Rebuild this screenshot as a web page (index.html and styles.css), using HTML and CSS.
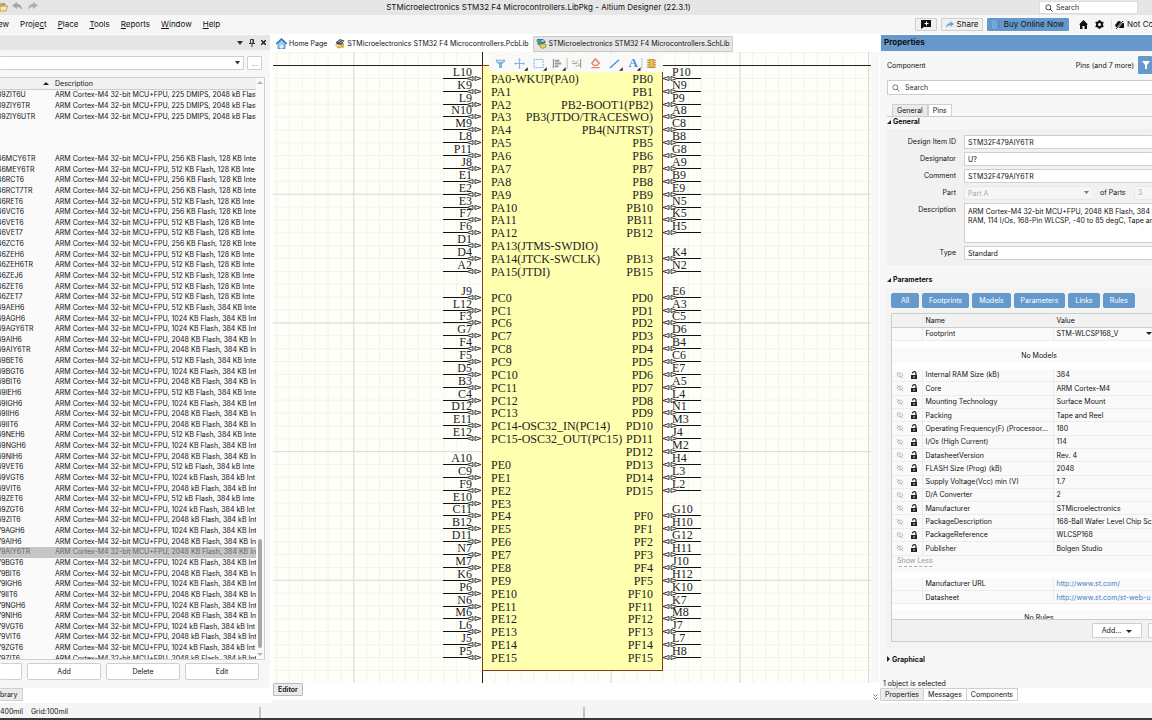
FILE: index.html
```html
<!DOCTYPE html>
<html lang="en">

<head>
    <meta charset="UTF-8">
    <meta name="viewport" content="width=device-width, initial-scale=1.0">
    <title>Altium Designer</title>
    <link rel="stylesheet" href="styles.css">
</head>

<body>
    <header class="titlebar">
        <div class="quick">
            <svg width="8" height="10" viewBox="0 0 8 10"><path d="M0 1h5l1 2v6H0z" fill="#d9b45f"/><path d="M0 4h7.500L6 9H0z" fill="#fbe7a6" stroke="#a8843c" stroke-width=".7"/><path d="M1 2h4" stroke="#5e93c5"/></svg>
            <svg width="11" height="9" viewBox="0 0 11 9"><path d="M5 0v2c3 0 5 2 5 6-1-2-2.500-3-5-3v2L0 3.500z" fill="#a5a5a5"/></svg>
            <svg width="11" height="9" viewBox="0 0 11 9"><path d="M6 0v2C3 2 1 4 1 8c1-2 2.500-3 5-3v2l5-3.500z" fill="#b0b0b0"/></svg>
        </div>
        <h1 class="title">STMicroelectronics STM32 F4 Microcontrollers.LibPkg - Altium Designer (22.3.1)</h1>
        <label class="title-search">
            <svg width="8" height="8" viewBox="0 0 8 8"><circle cx="3.300" cy="3.300" r="2.500" fill="none" stroke="#444"/><path d="M5 5l2.500 2.500" stroke="#444"/></svg>
            <input type="text" placeholder="Search" aria-label="Search">
        </label>
    </header>

    <nav class="menubar">
        <ul class="menu">
            <li>ew</li>
            <li>Proje<u>c</u>t</li>
            <li><u>P</u>lace</li>
            <li><u>T</u>ools</li>
            <li><u>R</u>eports</li>
            <li><u>W</u>indow</li>
            <li><u>H</u>elp</li>
        </ul>
        <div class="actions">
            <button class="btn-note" aria-label="Comment"><svg width="12" height="9" viewBox="0 0 12 9"><path d="M1 0h10v7H4L1 9z" fill="#111"/><path d="M6.500 1.500v4M4.500 3.500h4" stroke="#fff"/></svg></button>
            <button class="btn-share"><svg width="8" height="7" viewBox="0 0 8 7"><path d="M4.500 0L8 3 4.500 6V4.200C2.500 4.200 1 5 0 7c0-3 1.500-5 4.500-5z" fill="#6da9dc"/></svg>Share</button>
            <button class="btn-buy"><svg width="9" height="9" viewBox="0 0 9 9"><path d="M1 1v7M4 1v7M1 1h2M1 8h2" stroke="#86bdf0" fill="none"/><path d="M7 1v7" stroke="#4f82b4"/></svg>Buy Online Now</button>
            <svg width="9" height="9" viewBox="0 0 9 9"><path d="M4.500 0L9 4.500H8V9H5.500V6h-2v3H1V4.500H0z" fill="#111"/></svg>
            <svg width="9" height="9" viewBox="0 0 9 9"><circle cx="4.500" cy="4.500" r="2.500" fill="none" stroke="#111" stroke-width="2"/><path d="M4.500 0v2M4.500 7v2M.6 2.300l1.700 1M6.700 5.700l1.700 1M.6 6.700l1.700-1M6.700 3.300l1.700-1" stroke="#111" stroke-width="1.800"/></svg>
            <span class="cloud"><svg width="9" height="8" viewBox="0 0 9 8"><path d="M1 6a2 2 0 0 1 .5-3.500A2.500 2.500 0 0 1 6 1L2 6zM3.500 7l4-5A2 2 0 0 1 8 7z" fill="#111"/><path d="M1 8L8 0" stroke="#111"/></svg>Not Co</span>
        </div>
    </nav>

    <main class="workspace">
        <!-- library list -->
        <section class="library">
            <div class="panel-head">
                <svg width="6" height="4" viewBox="0 0 6 4"><path d="M0 0h6L3 4z" fill="#333"/></svg>
                <svg width="6" height="8" viewBox="0 0 6 8"><path d="M1.500 4V.5h3V4M0 4.500h6M3 5v3" fill="none" stroke="#333"/><path d="M4 1v3" stroke="#333"/></svg>
                <svg width="5" height="5" viewBox="0 0 5 5"><path d="M0 0l5 5M5 0L0 5" stroke="#222" stroke-width="1.500"/></svg>
            </div>
            <div class="picker">
                <select aria-label="Library"><option></option></select>
                <button>...</button>
            </div>
            <div class="list">
                <div class="list-scroll">
                    <table class="parts">
                        <thead>
                            <tr><th><span class="sort"></span></th><th>Description</th></tr>
                        </thead>
                        <tbody id="parts"></tbody>
                    </table>
                </div>
                <div class="scrollbar"><i class="up"></i><i class="thumb"></i><i class="down"></i></div>
            </div>
            <div class="list-buttons">
                <button aria-label="Place"></button>
                <button>Add</button>
                <button>Delete</button>
                <button>Edit</button>
            </div>
            <div class="panel-tabs">
                <button class="active cut">brary</button>
            </div>
        </section>

        <!-- schematic editor -->
        <section class="editor">
            <div class="doc-tabs">
                <button><svg width="11" height="11" viewBox="0 0 11 11"><path d="M2 5v5.500h7V5L5.500 2z" fill="#9fccf3" stroke="#3c7fc0" stroke-width=".8"/><path d="M0 6l5.500-5L11 6" fill="none" stroke="#3578bd" stroke-width="1.500"/><path d="M4.500 7h2v3.500h-2z" fill="#fff"/></svg>Home Page</button>
                <button><svg width="11" height="11" viewBox="0 0 11 11"><path d="M1 7l3 3.500 6-1V5L4 4z" fill="#d9b04c"/><path d="M2 4l4-3 4.500 1.500L7 7 2.500 6z" fill="#49545e"/><path d="M4 4l3-2M6 5l3-2" stroke="#a8b5bf"/><path d="M2 7l5 1" stroke="#fbeeb5"/></svg>STMicroelectronics STM32 F4 Microcontrollers.PcbLib</button>
                <button class="active"><svg width="11" height="11" viewBox="0 0 11 11"><path d="M1 1h6l3 3-4 3H2z" fill="#3778a9"/><path d="M0 3h4M1 5h4" stroke="#63b35a" stroke-width="1.200"/><path d="M4 6h6v3l-3 1.500L4 9z" fill="#eccb4e" stroke="#85761f" stroke-width=".6"/><path d="M5 3h3" stroke="#fff"/></svg>STMicroelectronics STM32 F4 Microcontrollers.SchLib</button>
            </div>
            <div class="sheet">
                <svg id="sheet" class="sheet-svg">
                    <defs>
                        <pattern id="minor" x="209" y="13" width="12.870" height="12.870" patternUnits="userSpaceOnUse">
                            <path d="M.5 0v13M0 .5h13" stroke="#f3f3ec" fill="none"/>
                        </pattern>
                        <pattern id="major" x="209" y="13" width="128.700" height="128.700" patternUnits="userSpaceOnUse">
                            <path d="M.5 0v129M0 .5h129" stroke="#dbdcd6" fill="none"/>
                        </pattern>
                    </defs>
                    <rect width="100%" height="100%" fill="#fffffa"/>
                    <rect width="100%" height="100%" fill="url(#minor)"/>
                    <rect width="100%" height="100%" fill="url(#major)"/>
                    <path d="M0 13.500h2000M209.500 0v2000" class="axis"/>
                    <rect x="209.500" y="13.500" width="180" height="605" class="chip"/>
                </svg>
                <div class="float-bar">
                    <svg viewBox="0 0 12 12"><path d="M1 2h10v1.500L7.500 7v4h-3V7L1 3.500z" fill="#7fb0dc"/><path d="M3 3.500h6" stroke="#fff"/></svg>
                    <svg viewBox="0 0 12 12"><path d="M6 1v10M1 6h10" stroke="#86b3db" stroke-width="1.200"/><path d="M6 0l1.500 2h-3zM6 12l1.500-2h-3zM0 6l2-1.500v3zM12 6l-2-1.500v3z" fill="#86b3db"/><path d="M15 10v4h-4z" fill="#222"/></svg>
                    <svg viewBox="0 0 12 12"><path d="M1 1.500h10v9H1z" fill="none" stroke="#6aa0d2" stroke-dasharray="1.500 1"/><path d="M15 10v4h-4z" fill="#222"/></svg>
                    <svg viewBox="0 0 12 12"><path d="M1.500 1v10" stroke="#777"/><path d="M3 2h5v2H3zM3 5h7v2H3zM3 8h4v2H3z" fill="#999"/><path d="M15 10v4h-4z" fill="#222"/><path d="M16.500 0v12" stroke="#bbb"/></svg>
                    <svg viewBox="0 0 12 12"><path d="M10.500 1v10" stroke="#8a9670"/><path d="M1 6h6M1 3.500h3M4 6l4-3M5 8.500h4v-3" stroke="#a9ac7d" fill="none"/></svg>
                    <svg viewBox="0 0 12 12"><path d="M4 8L2 5.500 6 1l4 4.500L8 8" fill="none" stroke="#df8660" stroke-width="1.600"/><path d="M1.500 10.500h9M4 8h4" fill="none" stroke="#df8660" stroke-width="1.300"/></svg>
                    <svg viewBox="0 0 12 12"><path d="M1 11L11 2" stroke="#4a8fd0" stroke-width="1.500"/><path d="M15 10v4h-4z" fill="#222"/></svg>
                    <span class="letter">A</span>
                    <svg viewBox="0 0 12 12"><path d="M3 1h6v10H3z" fill="#d2a33a"/><path d="M1 2.500h10M1 5h10M1 7.500h10M1 10h10" stroke="#a97d27"/><path d="M4 2h4v8H4z" fill="#e6bd55"/><path d="M-4.500 0v12" stroke="#bbb"/><path d="M-6 10v4h-4z" fill="#222"/></svg>
                </div>
            </div>
            <div class="editor-foot">
                <button>Editor</button>
                <svg class="more" width="5" height="6" viewBox="0 0 5 6"><path d="M.5.500l2 2 2-2M.5 3.500l2 2 2-2" fill="none" stroke="#777"/></svg>
            </div>
        </section>

        <!-- properties panel -->
        <aside class="props">
            <h2 class="props-title">Properties</h2>
            <div class="props-body">
                <div class="scope">
                    <span>Component</span>
                    <span class="scope-right">Pins (and 7 more)</span>
                    <button aria-label="Filter"><svg width="10" height="10" viewBox="0 0 10 10"><path d="M1 1h8L6 5v4H4V5z" fill="#fff"/></svg></button>
                </div>
                <label class="search">
                    <svg width="8" height="8" viewBox="0 0 8 8"><circle cx="3.300" cy="3.300" r="2.500" fill="none" stroke="#777"/><path d="M5 5l2.500 2.500" stroke="#777"/></svg>
                    <input type="text" placeholder="Search" aria-label="Search properties">
                </label>
                <div class="tabs">
                    <button class="active">General</button>
                    <button>Pins</button>
                </div>
                <h3><i class="tri"></i>General</h3>
                <form class="general">
                    <label for="item">Design Item ID</label>
                    <input id="item" type="text" value="STM32F479AIY6TR">
                    <label for="desig">Designator</label>
                    <input id="desig" type="text" value="U?">
                    <label for="comment">Comment</label>
                    <input id="comment" type="text" value="STM32F479AIY6TR">
                    <label for="part">Part</label>
                    <div class="part-row">
                        <select id="part" disabled><option>Part A</option></select>
                        <label for="count">of Parts</label>
                        <input id="count" type="text" value="3" disabled>
                    </div>
                    <label for="desc">Description</label>
                    <textarea id="desc">ARM Cortex-M4 32-bit MCU+FPU, 2048 KB Flash, 384 K
RAM, 114 I/Os, 168-Pin WLCSP, -40 to 85 degC, Tape an</textarea>
                    <label for="type">Type</label>
                    <select id="type"><option>Standard</option></select>
                </form>
                <h3 class="h-params"><i class="tri"></i>Parameters</h3>
                <div class="params">
                    <div class="pills">
                        <button>All</button>
                        <button>Footprints</button>
                        <button>Models</button>
                        <button>Parameters</button>
                        <button>Links</button>
                        <button>Rules</button>
                    </div>
                    <div class="grid-box">
                        <table class="grid">
                            <thead>
                                <tr><th></th><th>Name</th><th>Value</th></tr>
                            </thead>
                            <tbody>
                                <tr><td></td><td>Footprint</td><td>STM-WLCSP168_V<i class="drop"></i></td></tr>
                            </tbody>
                        </table>
                        <p class="empty">No Models</p>
                        <table class="grid values">
                            <tbody id="params"></tbody>
                        </table>
                        <div class="less-row"><button class="less">Show Less</button></div>
                        <table class="grid">
                            <tbody>
                                <tr><td></td><td>Manufacturer URL</td><td><a href="#">http://www.st.com/</a></td></tr>
                                <tr><td></td><td>Datasheet</td><td><a href="#">http://www.st.com/st-web-u</a></td></tr>
                            </tbody>
                        </table>
                        <p class="empty rules">No Rules</p>
                        <div class="grid-foot">
                            <button>Add...<i class="drop-s"></i></button>
                            <button aria-label="Edit"></button>
                        </div>
                    </div>
                </div>
                <h3 class="h-graph"><i class="tri shut"></i>Graphical</h3>
                <p class="picked">1 object is selected</p>
            </div>
            <div class="panel-tabs">
                <button class="active">Properties</button>
                <button>Messages</button>
                <button>Components</button>
            </div>
        </aside>
    </main>

    <footer class="status">
        <div class="coords"><span>400mil</span><span>Grid:100mil</span></div>
        <i class="sep"></i>
        <i class="sep"></i>
    </footer>

    <script src="script.js"></script>
</body>

</html>
```
FILE: styles.css
```css
* {
    margin: 0;
    padding: 0;
    box-sizing: border-box;
    list-style: none;
}

body {
    height: 100vh;
    display: flex;
    flex-direction: column;
    overflow: hidden;
    background-color: #fff;
    color: #111;
    font: 7px/11px Inter, "Noto Sans", sans-serif;
    white-space: nowrap;
}

button,
input,
select,
textarea {
    font: inherit;
    color: inherit;
    border: 1px solid #cfcfcf;
    background-color: #fff;
    border-radius: 1px;
    appearance: none;
    min-width: 0;
    outline: none;
}

input::placeholder {
    color: #333;
}

svg {
    flex: none;
}

/* title bar */
.titlebar {
    height: 15px;
    flex: none;
    display: flex;
    align-items: center;
    background-color: #e6e6e6;
}

.quick {
    display: flex;
    align-items: center;
    gap: 4px;
    padding-bottom: 2px;
}

.title {
    flex: 1;
    text-align: center;
    font-size: 8px;
    font-weight: normal;
}

.title-search {
    width: 99px;
    height: 13px;
    margin-right: 14px;
    padding-left: 5px;
    display: flex;
    align-items: center;
    gap: 3px;
    background-color: #fff;
    border: 1px solid #ddd;
}

.title-search input,
.search input {
    flex: 1;
    border: none;
}

/* menu */
.menubar {
    height: 19px;
    flex: none;
    display: flex;
    align-items: center;
    background-color: #f6f6f6;
    font-size: 8px;
}

.menu {
    display: flex;
    gap: 11px;
    flex: 1;
    margin-left: -2px;
}

.actions {
    width: 237px;
    height: 13px;
    overflow: hidden;
    display: flex;
    gap: 4px;
    align-items: center;
}

.actions button {
    height: 13px;
    flex: none;
    display: flex;
    align-items: center;
    justify-content: center;
    gap: 3px;
    background-color: #f0f0f0;
}

.actions .btn-note {
    width: 22px;
}

.actions .btn-share {
    width: 42px;
}

.actions .btn-buy {
    width: 82px;
    margin-right: 6px;
    background-color: #6599cb;
    border-color: #6599cb;
}

.actions > svg {
    margin-right: 3px;
}

.cloud {
    display: flex;
    align-items: center;
    gap: 3px;
    padding-left: 3px;
    border-left: 1px solid #e2e2e2;
}

.workspace {
    flex: 1;
    min-height: 0;
    display: grid;
    grid-template-columns: 270px 1fr 272px;
    padding-top: 1px;
}

.library,
.editor,
.props {
    display: flex;
    flex-direction: column;
    min-width: 0;
    min-height: 0;
    overflow: hidden;
}

/* library panel */
.library {
    background-color: #f7f7f7;
}

.panel-head {
    height: 15px;
    flex: none;
    display: flex;
    align-items: center;
    justify-content: flex-end;
    gap: 6px;
    padding-right: 4px;
    background-color: #e6e6e6;
}

.picker {
    display: flex;
    gap: 3px;
    padding: 6px 8px 7px 0;
}

.picker select {
    flex: 1;
    height: 14px;
    border-left: none;
    background: #fff url("data:image/svg+xml,%3Csvg xmlns='http://www.w3.org/2000/svg' width='5' height='4'%3E%3Cpath d='M0 0h5L2.500 3.500z' fill='%23333'/%3E%3C/svg%3E") no-repeat right 3px center;
}

.picker button {
    width: 15px;
    color: #888;
}

.list {
    flex: 1;
    min-height: 0;
    display: flex;
    margin-right: 5px;
    border: 1px solid #d0d0d0;
    border-left: none;
    background-color: #fafafa;
}

.list-scroll {
    flex: 1;
    overflow: hidden;
}

.parts {
    display: flex;
    flex-direction: column;
    height: calc(100% + 5px);
}

.parts tr {
    display: grid;
    grid-template-columns: 51px 1fr;
    align-items: center;
    min-height: 0;
}

.parts th {
    text-align: left;
    font-weight: normal;
    line-height: 11px;
}

.parts thead {
    background-color: #f1f1f1;
    border-bottom: 1px solid #ccc;
}

.parts th,
.parts td {
    padding-left: 4px;
}

.parts th:first-child {
    padding-left: 43px;
}

.parts tbody {
    flex: 1;
    min-height: 0;
    display: grid;
    grid-auto-rows: minmax(0, 1fr);
}

.parts td {
    line-height: 10px;
    overflow: hidden;
}

.parts td:first-child {
    text-indent: -7px;
}

.parts .selected {
    background-color: #c6c6c6;
    color: #666;
}

.sort {
    display: block;
    width: 6px;
    border: 3px solid transparent;
    border-top: none;
    border-bottom-color: #222;
}

.scrollbar {
    width: 8px;
    display: flex;
    flex-direction: column;
    align-items: center;
    padding: 3px 0;
}

.scrollbar i {
    border: 3px solid transparent;
}

.scrollbar .up {
    border-top: none;
    border-bottom-color: #b5b5b5;
}

.scrollbar .down {
    border-bottom: none;
    border-top-color: #b5b5b5;
}

.scrollbar .thumb {
    width: 4px;
    height: 19%;
    margin-top: auto;
    margin-bottom: 5px;
    border: none;
    border-radius: 2px;
    background-color: #a9a9a9;
}

.list-buttons {
    display: grid;
    grid-template-columns: 22px 1fr 1fr 1fr;
    gap: 5px;
    padding: 3px 11px 8px 0;
}

.list-buttons button {
    height: 17px;
    border-radius: 2px;
}

.list-buttons button:first-child {
    border-left: none;
}

.panel-tabs {
    flex: none;
    height: 15px;
    display: flex;
    align-items: flex-start;
    background-color: #fff;
}

.panel-tabs button {
    height: 13px;
    padding: 0 4px;
    border-left-width: 0;
}

.panel-tabs .active {
    border-left-width: 1px;
    background-color: #ebebeb;
}

.panel-tabs .cut {
    padding-left: 0;
    border-left: none;
}

/* editor */
.editor {
    padding-left: 3px;
    padding-right: 1px;
    background-color: #fff;
}

.doc-tabs {
    height: 17px;
    flex: none;
    display: flex;
    align-items: center;
    gap: 1px;
}

.doc-tabs button {
    height: 16px;
    display: flex;
    align-items: center;
    gap: 2px;
    padding: 0 2px;
    border-color: transparent;
}

.doc-tabs .active {
    background-color: #e6e6e6;
    border-color: #cbcbcb;
}

.sheet {
    flex: 1;
    min-height: 0;
    position: relative;
    overflow: hidden;
    border-right: 8px solid #f8f8f8;
}

.sheet-svg {
    display: block;
    width: 100%;
    height: 100%;
}

.sheet-svg text {
    font: 12px "Liberation Serif", serif;
    fill: #222;
}

.axis {
    stroke: #222;
    fill: none;
}

.chip {
    fill: #ffffb0;
    stroke: #8a3a1a;
}

.pin {
    stroke: #111;
    stroke-width: 1px;
}

.arrow {
    fill: #fff;
    stroke: #333;
    stroke-width: 1px;
}

.float-bar {
    position: absolute;
    top: 2px;
    left: 216px;
    height: 18px;
    width: 174px;
    display: flex;
    align-items: center;
    justify-content: space-between;
    padding: 0 6px;
    background-color: #f9f9f9;
}

.float-bar svg {
    width: 11px;
    height: 11px;
    overflow: visible;
}

.letter {
    font: bold 13px/14px "Liberation Serif", serif;
    color: #4a8fd0;
}

.editor-foot {
    height: 20px;
    flex: none;
    display: flex;
    align-items: flex-start;
    justify-content: space-between;
    border-bottom: 3px solid #f5f5f5;
}

.editor-foot button {
    height: 13px;
    padding: 0 4px;
    background-color: #ebebeb;
    border-color: #bbb;
    font-weight: 600;
}

.more {
    align-self: flex-end;
    margin-right: 1px;
}

/* properties */
.props-title {
    height: 16px;
    flex: none;
    padding-left: 3px;
    background-color: #6599cb;
    font-size: 8px;
    line-height: 15px;
    color: #111;
    border-left: 1px solid #f7f7f7;
}

.props-body {
    flex: 1;
    min-height: 0;
    padding-left: 7px;
    background-color: #f7f7f7;
    display: flex;
    flex-direction: column;
}

.scope {
    display: flex;
    align-items: center;
    padding-top: 5px;
}

.scope-right {
    margin-left: auto;
    margin-right: 4px;
}

.scope button {
    width: 14px;
    height: 18px;
    padding-left: 3px;
    overflow: hidden;
    display: flex;
    align-items: center;
    background-color: #6599cb;
    border: none;
}

.search {
    height: 15px;
    margin-top: 6px;
    padding-left: 4px;
    display: flex;
    align-items: center;
    gap: 5px;
    border: 1px solid #ccc;
    border-right: none;
    background-color: #fff;
}

.tabs {
    display: flex;
    margin-top: 9px;
    padding-left: 5px;
    border-bottom: 1px solid #ccc;
}

.tabs button {
    height: 12px;
    padding: 0 4px;
    border-bottom: none;
}

.tabs .active {
    background-color: #ebebeb;
}

h3 {
    height: 12px;
    font-size: 7px;
    line-height: 10px;
    color: #111;
}

.tri {
    display: inline-block;
    margin-right: 2px;
    border: 2px solid #222;
    border-top-color: transparent;
    border-left-color: transparent;
}

.tri.shut {
    border: 3px solid transparent;
    border-right: none;
    border-left-color: #222;
}

.general {
    display: grid;
    grid-template-columns: 69px 1fr;
    column-gap: 8px;
    row-gap: 3px;
    padding: 6px 0 5px;
    background-color: #f1f1f1;
}

.general > label {
    text-align: right;
    line-height: 14px;
}

.general input,
.general select {
    height: 14px;
    padding: 0 3px;
    border-right: none;
}

.general textarea {
    height: 40px;
    padding: 3px;
    line-height: 9px;
    border-right: none;
    resize: none;
    overflow: hidden;
    white-space: pre;
}

.part-row {
    display: grid;
    grid-template-columns: 128px auto 1fr;
    gap: 8px;
    line-height: 14px;
}

.part-row :disabled {
    border-color: #e8e8e8;
    background-color: #f6f6f6;
    color: #aaa;
    opacity: 1;
}

.part-row select:disabled {
    background: #f6f6f6 url("data:image/svg+xml,%3Csvg xmlns='http://www.w3.org/2000/svg' width='5' height='4'%3E%3Cpath d='M0 0h5L2.500 3z' fill='%23777'/%3E%3C/svg%3E") no-repeat right 3px center;
}

.h-params {
    margin-top: 10px;
    margin-bottom: 1px;
}

.params {
    padding: 5px 0 6px 4px;
    background-color: #f3f3f3;
}

.pills {
    display: flex;
    gap: 3px;
    margin-bottom: 5px;
}

.pills button {
    min-width: 28px;
    height: 15px;
    padding: 0 6px;
    color: #fff;
    background-color: #6599cb;
    border-color: #6599cb;
    border-radius: 2px;
}

.grid-box {
    border: 1px solid #ccc;
    border-right: none;
    background-color: #fff;
}

.grid {
    width: 100%;
    table-layout: fixed;
    border-collapse: collapse;
    background-color: #fafafa;
}

.grid th,
.grid td {
    height: 13px;
    line-height: 11px;
    padding-left: 3px;
    text-align: left;
    font-weight: normal;
    border-bottom: 1px solid #ececec;
    border-left: 1px solid #ececec;
    overflow: hidden;
}

.grid th {
    background-color: #f2f2f2;
    border-bottom-color: #ccc;
}

.grid tr > :first-child {
    width: 30px;
    border-left: none;
}

.grid tr > :nth-child(2) {
    width: 131px;
}

/* 14 rows share the height */
.values {
    height: 187px;
}

.flags {
    display: flex;
    gap: 6px;
    padding-left: 1px;
}

.grid a {
    color: #3f7fb8;
    text-decoration: none;
}

.drop,
.drop-s {
    display: inline-block;
    border: 3px solid transparent;
    border-bottom: none;
    border-top-color: #222;
    vertical-align: middle;
}

.drop {
    float: right;
    margin-top: 4px;
}

.drop-s {
    margin-left: 5px;
}

.empty {
    width: 294px;
    margin: 7px 0 6px;
    line-height: 15px;
    text-align: center;
    background: #fafafa;
}

.less-row {
    height: 22px;
    background-color: #fafafa;
    border-bottom: 6px solid #fff;
}

.less {
    display: block;
    margin-left: 5px;
    line-height: 10px;
    border: none;
    border-bottom: 1px dashed #aaa;
    background: none;
    color: #999;
}

.empty.rules {
    height: 9px;
    margin: 6px 0 0;
    overflow: hidden;
}

.grid-foot {
    display: flex;
    justify-content: flex-end;
    gap: 6px;
    padding: 3px 0;
    background-color: #f1f1f1;
    border-top: 1px solid #ccc;
}

.grid-foot button {
    height: 15px;
    width: 50px;
}

.grid-foot button:last-child {
    width: 4px;
    border-right: none;
}

.h-graph {
    margin-top: 7px;
}

.picked {
    margin-top: auto;
    margin-left: -4px;
    line-height: 8px;
}

/* status bar */
.status {
    height: 17px;
    flex: none;
    display: flex;
    background-color: #f5f5f5;
    border-bottom: 2px solid #3a3a3a;
}

.coords {
    width: 259px;
    display: flex;
    gap: 8px;
    line-height: 17px;
}

.sep {
    width: 324px;
    height: 11px;
    align-self: flex-end;
    border-left: 2px solid #c4c4c4;
}
```
FILE: script.js
```js
var NS = 'http://www.w3.org/2000/svg';

// name, flash size, ram size, unit
var parts = [
    ['39ZIT6U'], ['39ZIY6TR'], ['39ZIY6UTR'], null, null, null,
    ['46MCY6TR', 256, 128], ['46MEY6TR', 512, 128], ['46RCT6', 256, 128], ['46RCT7TR', 256, 128],
    ['46RET6', 512, 128], ['46VCT6', 256, 128], ['46VET6', 512, 128], ['46VET7', 512, 128],
    ['46ZCT6', 256, 128], ['46ZEH6', 512, 128], ['46ZEH6TR', 512, 128], ['46ZEJ6', 512, 128],
    ['46ZET6', 512, 128], ['46ZET7', 512, 128],
    ['69AEH6', 512, 384], ['69AGH6', 1024, 384], ['69AGY6TR', 1024, 384], ['69AIH6', 2048, 384],
    ['69AIY6TR', 2048, 384], ['69BET6', 512, 384], ['69BGT6', 1024, 384], ['69BIT6', 2048, 384],
    ['69IEH6', 512, 384], ['69IGH6', 1024, 384], ['69IIH6', 2048, 384], ['69IIT6', 2048, 384],
    ['69NEH6', 512, 384], ['69NGH6', 1024, 384], ['69NIH6', 2048, 384],
    ['69VET6', 512, 384, 'kB'], ['69VGT6', 1024, 384, 'kB'], ['69VIT6', 2048, 384, 'kB'],
    ['69ZET6', 512, 384, 'kB'], ['69ZGT6', 1024, 384, 'kB'], ['69ZIT6', 2048, 384, 'kB'],
    ['79AGH6', 1024, 384], ['79AIH6', 2048, 384], ['79AIY6TR', 2048, 384], ['79BGT6', 1024, 384],
    ['79BIT6', 2048, 384], ['79IGH6', 1024, 384], ['79IIT6', 2048, 384], ['79NGH6', 1024, 384],
    ['79NIH6', 2048, 384], ['79VGT6', 1024, 384, 'kB'], ['79VIT6', 2048, 384, 'kB'],
    ['79ZGT6', 1024, 384, 'kB'], ['79ZIT6', 2048, 384, 'kB']
];

var params = [
    ['Internal RAM Size (kB)', '384'],
    ['Core', 'ARM Cortex-M4'],
    ['Mounting Technology', 'Surface Mount'],
    ['Packing', 'Tape and Reel'],
    ['Operating Frequency(F) (Processor...', '180'],
    ['I/Os (High Current)', '114'],
    ['DatasheetVersion', 'Rev. 4'],
    ['FLASH Size (Prog) (kB)', '2048'],
    ['Supply Voltage(Vcc) min (V)', '1.7'],
    ['D/A Converter', '2'],
    ['Manufacturer', 'STMicroelectronics'],
    ['PackageDescription', '168-Ball Wafer Level Chip Sc'],
    ['PackageReference', 'WLCSP168'],
    ['Publisher', 'Bolgen Studio']
];

// "number name" for each slot, empty string leaves a gap
var leftPins = ['L10 PA0-WKUP(PA0)', 'K9 PA1', 'L9 PA2', 'N10 PA3', 'M9 PA4', 'L8 PA5', 'P11 PA6', 'J8 PA7',
    'E1 PA8', 'E2 PA9', 'E3 PA10', 'F7 PA11', 'F6 PA12', 'D1 PA13(JTMS-SWDIO)', 'D4 PA14(JTCK-SWCLK)',
    'A2 PA15(JTDI)', '', 'J9 PC0', 'L12 PC1', 'F3 PC6', 'G7 PC7', 'F4 PC8', 'F5 PC9', 'D5 PC10', 'B3 PC11',
    'C4 PC12', 'D12 PC13', 'E11 PC14-OSC32_IN(PC14)', 'E12 PC15-OSC32_OUT(PC15)', '', 'A10 PE0', 'C9 PE1',
    'F9 PE2', 'E10 PE3', 'C11 PE4', 'B12 PE5', 'D11 PE6', 'N7 PE7', 'M7 PE8', 'K6 PE9', 'P6 PE10', 'N6 PE11',
    'M6 PE12', 'L6 PE13', 'J5 PE14', 'P5 PE15'];
var rightPins = ['P10 PB0', 'N9 PB1', 'P9 PB2-BOOT1(PB2)', 'A8 PB3(JTDO/TRACESWO)', 'C8 PB4(NJTRST)', 'B8 PB5',
    'G8 PB6', 'A9 PB7', 'B9 PB8', 'E9 PB9', 'N5 PB10', 'K5 PB11', 'H5 PB12', '', 'K4 PB13', 'N2 PB15', '',
    'E6 PD0', 'A3 PD1', 'C5 PD2', 'D6 PD3', 'B4 PD4', 'C6 PD5', 'E7 PD6', 'A5 PD7', 'L4 PD8', 'N1 PD9',
    'M3 PD10', 'J4 PD11', 'M2 PD12', 'H4 PD13', 'L3 PD14', 'L2 PD15', '', 'G10 PF0', 'H10 PF1', 'G12 PF2',
    'H11 PF3', 'J10 PF4', 'H12 PF5', 'K10 PF10', 'K7 PF11', 'M8 PF12', 'J7 PF13', 'L7 PF14', 'H8 PF15'];

function partText(p) {
    var unit = p[3] || 'KB';
    if (!p[1]) {
        return 'ARM Cortex-M4 32-bit MCU+FPU, 225 DMIPS, 2048 kB Flash';
    }
    return 'ARM Cortex-M4 32-bit MCU+FPU, ' + p[1] + ' ' + unit + ' Flash, ' + p[2] + ' ' + unit + (p[1] > 999 ? ' Int' : ' Inte');
}

document.querySelector('#parts').innerHTML = parts.map(function (p) {
    if (!p) return '<tr><td></td><td></td></tr>';
    var cls = p[0] === '79AIY6TR' ? ' class="selected"' : '';
    return '<tr' + cls + '><td>' + p[0] + '</td><td>' + partText(p) + '</td></tr>';
}).join('');

var flags = '<div class="flags">' +
    '<svg width="8" height="8" viewBox="0 0 8 8"><path d="M1 4c1.500-2.500 4.500-2.500 6 0-1.500 2.500-4.500 2.500-6 0zM1 1l6 6.500" fill="none" stroke="#aaa" stroke-width=".8"/></svg>' +
    '<svg width="8" height="8" viewBox="0 0 8 8"><path d="M1 4h6v4H1z" fill="#222"/><path d="M2.500 2.500c0-2.500 3.500-2.500 3.500 0V4" fill="none" stroke="#222" stroke-width="1.200"/><path d="M4 5v2" stroke="#ddd"/></svg></div>';

document.querySelector('#params').innerHTML = params.map(function (p) {
    return '<tr><td>' + flags + '</td><td>' + p[0] + '</td><td>' + p[1] + '</td></tr>';
}).join('');

var sheet = document.querySelector('#sheet');

function add(tag, attrs, text) {
    var el = document.createElementNS(NS, tag);
    for (var key in attrs) {
        el.setAttribute(key, attrs[key]);
    }
    if (text) el.textContent = text;
    sheet.appendChild(el);
}

// side is -1 for the left edge of the chip and 1 for the right edge
function drawPins(list, edge, side) {
    list.forEach(function (item, i) {
        if (!item) return;
        var pin = item.split(' ');
        var y = Math.round(13 + 12.87 * (i + 1)) + 0.5;
        var outer = side < 0 ? 'end' : 'start';
        var inner = side < 0 ? 'start' : 'end';
        add('text', { x: edge + side * 10, y: y - 2.5, 'text-anchor': outer }, pin[0]);
        add('text', { x: edge - side * 9, y: y + 4, 'text-anchor': inner }, pin[1]);
        add('path', { d: 'M' + (edge + side * 15) + ' ' + y + 'H' + (edge + side * 39), 'class': 'pin' });
        add('path', {
            d: 'M' + (edge + side * 15) + ' ' + y + 'l' + (-side * 6) + ' -2v4z' +
                'M' + (edge + side * 1) + ' ' + y + 'l' + (side * 6) + ' -2v4z',
            'class': 'arrow'
        });
    });
}

drawPins(leftPins, 209, -1);
drawPins(rightPins, 389, 1);
```
